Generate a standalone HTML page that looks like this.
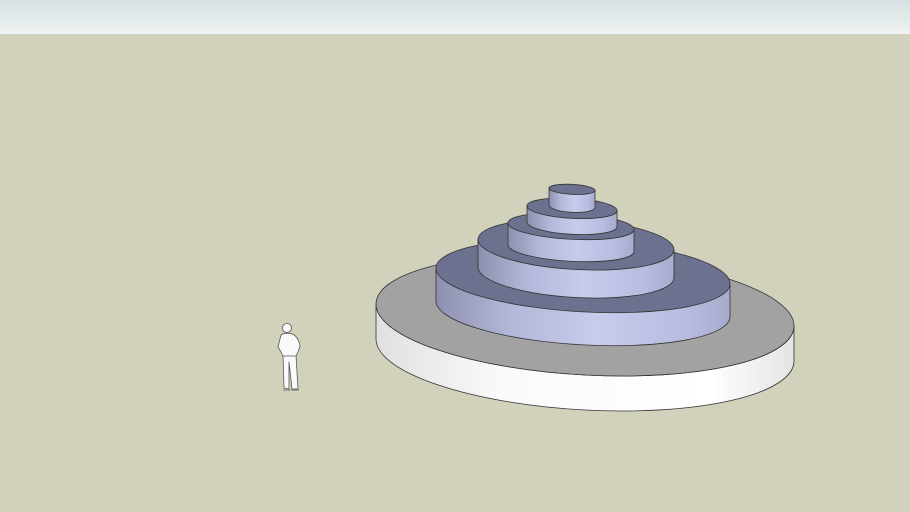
<!DOCTYPE html>
<html><head><meta charset="utf-8"><style>
html,body{margin:0;padding:0;width:910px;height:512px;overflow:hidden;background:#d2d1bc}
</style></head><body>
<svg width="910" height="512" viewBox="0 0 910 512" xmlns="http://www.w3.org/2000/svg">
<defs>
<linearGradient id="sky" x1="0" y1="0" x2="0" y2="1">
<stop offset="0" stop-color="#d6e0e2"/><stop offset="1" stop-color="#eef2f2"/></linearGradient>
<linearGradient id="side" x1="0" y1="0" x2="1" y2="0">
<stop offset="0" stop-color="#8d90ad"/><stop offset="0.25" stop-color="#b3b7d9"/><stop offset="0.55" stop-color="#c8cbeb"/><stop offset="0.85" stop-color="#b8bce0"/><stop offset="1" stop-color="#a6aacb"/></linearGradient>
<linearGradient id="base" x1="0" y1="0" x2="1" y2="0">
<stop offset="0" stop-color="#e0e0e0"/><stop offset="0.3" stop-color="#fafafa"/><stop offset="0.8" stop-color="#ffffff"/><stop offset="1" stop-color="#e4e4e4"/></linearGradient>
</defs>
<rect width="910" height="512" fill="#d2d1bc"/>
<rect width="910" height="34" fill="url(#sky)"/>
<g stroke="#333" stroke-width="0.8" stroke-linejoin="round" transform="translate(585 0) skewY(3) translate(-585 0)">
<path d="M376 315 L376 350 A209 60 0 0 0 794 350 L794 315 A209 60 0 0 1 376 315 Z" fill="url(#base)"/>
<ellipse cx="585" cy="315" rx="209" ry="60" fill="#a2a2a2"/>
<path d="M436 276 L436 309 A147 36 0 0 0 730 309 L730 276 Z" fill="url(#side)"/>
<ellipse cx="583" cy="276" rx="147" ry="36" fill="#6d7190"/>
<path d="M478 245 L478 273 A98 25 0 0 0 674 273 L674 245 Z" fill="url(#side)"/>
<ellipse cx="576" cy="245" rx="98" ry="25" fill="#6d7190"/>
<path d="M508 227 L508 249 A63 13 0 0 0 634 249 L634 227 Z" fill="url(#side)"/>
<ellipse cx="571" cy="227" rx="63" ry="13" fill="#6d7190"/>
<path d="M527 209 L527 225 A45 10 0 0 0 617 225 L617 209 Z" fill="url(#side)"/>
<ellipse cx="572" cy="209" rx="45" ry="10" fill="#6d7190"/>
<path d="M549 190 L549 207 A23 6 0 0 0 595 207 L595 190 Z" fill="url(#side)"/>
<ellipse cx="572" cy="190" rx="23" ry="5" fill="#6d7190"/>
</g>
<g stroke="#555" stroke-width="0.8" fill="#fafafa" stroke-linejoin="round">
<path d="M283 355 L284 388 L289 389 L289 362 L292 389 L298 389 L296 355 Z"/>
<path d="M281 335 Q286 332 292 334 Q298 336 300 346 L298 352 L296 356 L283 356 L281 352 L278 347 Z"/>
<circle cx="287" cy="328" r="4.5"/>
<path d="M283 390 L290 390 M291 390 L299 390" fill="none"/>
</g>
</svg>
</body></html>
